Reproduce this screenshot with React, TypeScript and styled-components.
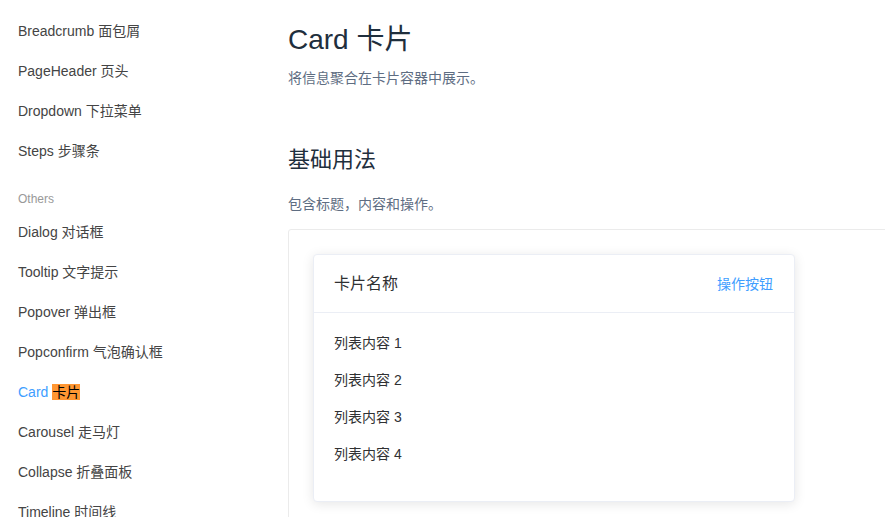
import React from "react";
import styled, {createGlobalStyle} from "styled-components";

const GlobalStyle = createGlobalStyle`
    html, body {
        margin: 0;
        padding: 0;
        background: #fff;
        overflow: hidden;
    }
    body {
        font-family: "Liberation Sans", "Noto Sans CJK SC", sans-serif;
        -webkit-font-smoothing: antialiased;
    }
`;

const StyledPage = styled.div`
    display: grid;
    grid-template-columns: 288px 720px;
    width: 885px;
    height: 517px;
    overflow: hidden;
`;

const StyledSidebar = styled.nav`
    padding-top: 11px;
`;

const StyledNavItem = styled.div<{$active?: boolean}>`
    padding-left: 18px;
    font-size: 14px;
    line-height: 40px;
    height: 40px;
    color: ${props => props.$active ? "#409eff" : "#444"};
    white-space: nowrap;
`;

const StyledMark = styled.mark`
    background: #ff9632;
    color: #000;
`;

const StyledGroupTitle = styled.div`
    margin-top: 15px;
    padding-left: 18px;
    font-size: 12px;
    line-height: 26px;
    color: #999;
`;

const StyledMain = styled.main`
    padding-top: 23px;
`;

const StyledTitle = styled.h2`
    margin: 0;
    font-size: 28px;
    font-weight: 400;
    line-height: 34px;
    color: #1f2f3d;
`;

const StyledParagraph = styled.p<{$gap: number}>`
    margin: ${props => props.$gap}px 0 0;
    font-size: 14px;
    line-height: 22px;
    color: #5e6d82;
`;

const StyledSubTitle = styled.h3`
    margin: 56px 0 0;
    font-size: 22px;
    font-weight: 400;
    line-height: 30px;
    color: #1f2f3d;
`;

const StyledDemoBlock = styled.div`
    margin-top: 14px;
    border: 1px solid #ebebeb;
    border-radius: 3px;
    padding: 24px;
    height: 400px;
`;

const StyledCard = styled.div`
    width: 480px;
    border: 1px solid #ebeef5;
    border-radius: 4px;
    background: #fff;
    color: #303133;
    box-shadow: 0 2px 12px 0 rgba(0, 0, 0, 0.1);
    overflow: hidden;
`;

const StyledCardHeader = styled.div`
    display: flex;
    justify-content: space-between;
    align-items: center;
    padding: 18px 20px 17px;
    line-height: 22px;
    border-bottom: 1px solid #ebeef5;
`;

const StyledCardTitle = styled.span`
    font-size: 16px;
`;

const StyledTextButton = styled.button`
    border: 0;
    background: none;
    padding: 0 1px 0 0;
    font: inherit;
    font-size: 14px;
    color: #409eff;
    cursor: pointer;
`;

const StyledCardBody = styled.div`
    padding: 21px 20px 19px;
`;

const StyledItem = styled.div`
    font-size: 14px;
    line-height: 19px;
    margin-bottom: 18px;
`;

const before = ["Breadcrumb 面包屑", "PageHeader 页头", "Dropdown 下拉菜单", "Steps 步骤条"];
const others = ["Dialog 对话框", "Tooltip 文字提示", "Popover 弹出框", "Popconfirm 气泡确认框"];
const after = ["Carousel 走马灯", "Collapse 折叠面板", "Timeline 时间线"];

const App: React.FC = () => {
    return <>
        <GlobalStyle/>
        <StyledPage>
            <StyledSidebar>
                {before.map(label => <StyledNavItem key={label}>{label}</StyledNavItem>)}
                <StyledGroupTitle>Others</StyledGroupTitle>
                {others.map(label => <StyledNavItem key={label}>{label}</StyledNavItem>)}
                <StyledNavItem $active>Card <StyledMark>卡片</StyledMark></StyledNavItem>
                {after.map(label => <StyledNavItem key={label}>{label}</StyledNavItem>)}
            </StyledSidebar>
            <StyledMain>
                <StyledTitle>Card 卡片</StyledTitle>
                <StyledParagraph $gap={10}>将信息聚合在卡片容器中展示。</StyledParagraph>
                <StyledSubTitle>基础用法</StyledSubTitle>
                <StyledParagraph $gap={18}>包含标题，内容和操作。</StyledParagraph>
                <StyledDemoBlock>
                    <StyledCard>
                        <StyledCardHeader>
                            <StyledCardTitle>卡片名称</StyledCardTitle>
                            <StyledTextButton>操作按钮</StyledTextButton>
                        </StyledCardHeader>
                        <StyledCardBody>
                            {[1, 2, 3, 4].map(n => <StyledItem key={n}>{"列表内容 " + n}</StyledItem>)}
                        </StyledCardBody>
                    </StyledCard>
                </StyledDemoBlock>
            </StyledMain>
        </StyledPage>
    </>;
};

export default App;
